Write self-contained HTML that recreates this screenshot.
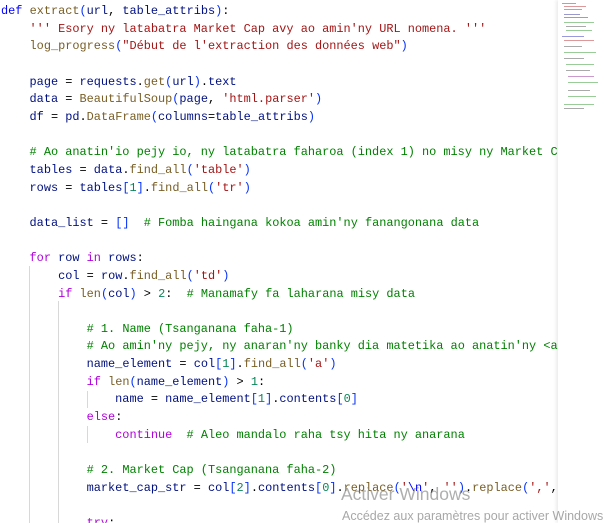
<!DOCTYPE html>
<html><head><meta charset="utf-8"><style>
html,body{margin:0;padding:0;background:#fff;width:604px;height:523px;overflow:hidden;position:relative}
pre{margin:0;position:absolute;left:1px;top:3px;font-family:"Liberation Mono",monospace;font-size:11.9px;line-height:17.65px;color:#000;white-space:pre}
.k{color:#0000ff}.c{color:#af00db}.s{color:#a31515}.m{color:#008000}.f{color:#795e26}.v{color:#001080}.n{color:#098658}.b{color:#0431fa}.g{color:#319331}
.guide{position:absolute;width:1px;background:#d8d8d8}
.mini{position:absolute;left:558px;top:0;width:46px;height:523px;background:#fff;box-shadow:-2px 0 3px rgba(0,0,0,0.08)}
.mini i{position:absolute;height:1px;display:block}
.wm1{position:absolute;left:341px;top:484px;font-family:"Liberation Sans",sans-serif;font-size:17.5px;color:rgba(120,120,120,0.6);white-space:nowrap}
.wm2{position:absolute;left:342px;top:509px;font-family:"Liberation Sans",sans-serif;font-size:12.5px;color:rgba(120,120,120,0.65);white-space:nowrap}
</style></head><body>
<div class="guide" style="left:29px;top:266px;height:257px"></div>
<div class="guide" style="left:58px;top:301px;height:222px"></div>
<div class="guide" style="left:87px;top:391px;height:17px"></div>
<div class="guide" style="left:87px;top:426px;height:17px"></div>
<pre><span class="k">def</span> <span class="f">extract</span><span class="b">(</span><span class="v">url</span>, <span class="v">table_attribs</span><span class="b">)</span>:
    <span class="s">''' Esory ny latabatra Market Cap avy ao amin'ny URL nomena. '''</span>
    <span class="f">log_progress</span><span class="b">(</span><span class="s">"Début de l'extraction des données web"</span><span class="b">)</span>

    <span class="v">page</span> = <span class="v">requests</span>.<span class="f">get</span><span class="b">(</span><span class="v">url</span><span class="b">)</span>.<span class="v">text</span>
    <span class="v">data</span> = <span class="f">BeautifulSoup</span><span class="b">(</span><span class="v">page</span>, <span class="s">'html.parser'</span><span class="b">)</span>
    <span class="v">df</span> = <span class="v">pd</span>.<span class="f">DataFrame</span><span class="b">(</span><span class="v">columns</span>=<span class="v">table_attribs</span><span class="b">)</span>

    <span class="m"># Ao anatin'io pejy io, ny latabatra faharoa (index 1) no misy ny Market Cap</span>
    <span class="v">tables</span> = <span class="v">data</span>.<span class="f">find_all</span><span class="b">(</span><span class="s">'table'</span><span class="b">)</span>
    <span class="v">rows</span> = <span class="v">tables</span><span class="b">[</span><span class="n">1</span><span class="b">]</span>.<span class="f">find_all</span><span class="b">(</span><span class="s">'tr'</span><span class="b">)</span>

    <span class="v">data_list</span> = <span class="b">[]</span>  <span class="m"># Fomba haingana kokoa amin'ny fanangonana data</span>

    <span class="c">for</span> <span class="v">row</span> <span class="c">in</span> <span class="v">rows</span>:
        <span class="v">col</span> = <span class="v">row</span>.<span class="f">find_all</span><span class="b">(</span><span class="s">'td'</span><span class="b">)</span>
        <span class="c">if</span> <span class="f">len</span><span class="b">(</span><span class="v">col</span><span class="b">)</span> &gt; <span class="n">2</span>:  <span class="m"># Manamafy fa laharana misy data</span>

            <span class="m"># 1. Name (Tsanganana faha-1)</span>
            <span class="m"># Ao amin'ny pejy, ny anaran'ny banky dia matetika ao anatin'ny &lt;a&gt;</span>
            <span class="v">name_element</span> = <span class="v">col</span><span class="b">[</span><span class="n">1</span><span class="b">]</span>.<span class="f">find_all</span><span class="b">(</span><span class="s">'a'</span><span class="b">)</span>
            <span class="c">if</span> <span class="f">len</span><span class="b">(</span><span class="v">name_element</span><span class="b">)</span> &gt; <span class="n">1</span>:
                <span class="v">name</span> = <span class="v">name_element</span><span class="b">[</span><span class="n">1</span><span class="b">]</span>.<span class="v">contents</span><span class="b">[</span><span class="n">0</span><span class="b">]</span>
            <span class="c">else</span>:
                <span class="c">continue</span>  <span class="m"># Aleo mandalo raha tsy hita ny anarana</span>

            <span class="m"># 2. Market Cap (Tsanganana faha-2)</span>
            <span class="v">market_cap_str</span> = <span class="v">col</span><span class="b">[</span><span class="n">2</span><span class="b">]</span>.<span class="v">contents</span><span class="b">[</span><span class="n">0</span><span class="b">]</span>.<span class="f">replace</span><span class="b">(</span><span class="s">'</span><span class="k">\n</span><span class="s">'</span>, <span class="s">''</span><span class="b">)</span>.<span class="f">replace</span><span class="b">(</span><span class="s">','</span>, <span class="s">''</span><span class="b">)</span>

            <span class="c">try</span>:
</pre>
<div class="mini">
<i style="left:4px;top:3px;width:14px;background:#9ab"></i>
<i style="left:6px;top:6px;width:22px;background:#d99"></i>
<i style="left:6px;top:9px;width:18px;background:#aaa"></i>
<i style="left:6px;top:14px;width:16px;background:#99c"></i>
<i style="left:6px;top:17px;width:24px;background:#a9a"></i>
<i style="left:6px;top:22px;width:30px;background:#9c9"></i>
<i style="left:8px;top:26px;width:20px;background:#aaa"></i>
<i style="left:8px;top:30px;width:26px;background:#9c9"></i>
<i style="left:4px;top:36px;width:22px;background:#99d"></i>
<i style="left:6px;top:40px;width:30px;background:#d99"></i>
<i style="left:6px;top:46px;width:18px;background:#aaa"></i>
<i style="left:6px;top:52px;width:32px;background:#9c9"></i>
<i style="left:6px;top:58px;width:20px;background:#aaa"></i>
<i style="left:8px;top:64px;width:28px;background:#9c9"></i>
<i style="left:8px;top:70px;width:24px;background:#aaa"></i>
<i style="left:10px;top:76px;width:26px;background:#c9c"></i>
<i style="left:10px;top:82px;width:30px;background:#9c9"></i>
<i style="left:10px;top:90px;width:22px;background:#aaa"></i>
<i style="left:10px;top:96px;width:28px;background:#9c9"></i>
<i style="left:6px;top:104px;width:30px;background:#9c9"></i>
<i style="left:6px;top:108px;width:20px;background:#aaa"></i>
</div>
<div class="wm1">Activer Windows</div>
<div class="wm2">Accédez aux paramètres pour activer Windows.</div>
</body></html>
